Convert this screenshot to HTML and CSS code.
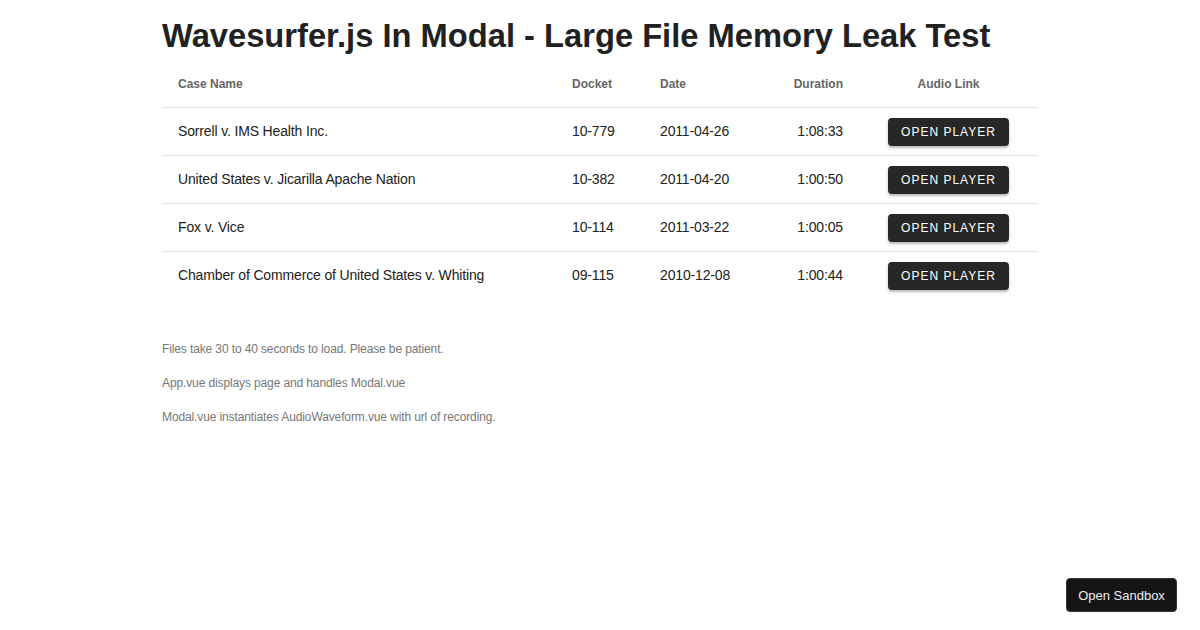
FILE: index.html
```html
<!DOCTYPE html>
<html lang="en">
<head>
    <meta charset="UTF-8">
    <meta name="viewport" content="width=device-width, initial-scale=1.0">
    <title>Wavesurfer.js In Modal</title>
    <link rel="stylesheet" href="styles.css">
</head>
<body>
    <div class="container">
        <h1>Wavesurfer.js In Modal - Large File Memory Leak Test</h1>

        <table class="cases">
            <thead>
                <tr>
                    <th class="col-name">Case Name</th>
                    <th class="col-docket">Docket</th>
                    <th class="col-date">Date</th>
                    <th class="col-duration">Duration</th>
                    <th class="col-audio">Audio Link</th>
                </tr>
            </thead>
            <tbody>
                <tr>
                    <td>Sorrell v. IMS Health Inc.</td>
                    <td>10-779</td>
                    <td>2011-04-26</td>
                    <td class="col-duration">1:08:33</td>
                    <td class="col-audio"><button class="player-btn">Open Player</button></td>
                </tr>
                <tr>
                    <td>United States v. Jicarilla Apache Nation</td>
                    <td>10-382</td>
                    <td>2011-04-20</td>
                    <td class="col-duration">1:00:50</td>
                    <td class="col-audio"><button class="player-btn">Open Player</button></td>
                </tr>
                <tr>
                    <td>Fox v. Vice</td>
                    <td>10-114</td>
                    <td>2011-03-22</td>
                    <td class="col-duration">1:00:05</td>
                    <td class="col-audio"><button class="player-btn">Open Player</button></td>
                </tr>
                <tr>
                    <td>Chamber of Commerce of United States v. Whiting</td>
                    <td>09-115</td>
                    <td>2010-12-08</td>
                    <td class="col-duration">1:00:44</td>
                    <td class="col-audio"><button class="player-btn">Open Player</button></td>
                </tr>
            </tbody>
        </table>

        <div class="notes">
            <p>Files take 30 to 40 seconds to load. Please be patient.</p>
            <p>App.vue displays page and handles Modal.vue</p>
            <p>Modal.vue instantiates AudioWaveform.vue with url of recording.</p>
        </div>
    </div>

    <button class="sandbox-btn">Open Sandbox</button>
</body>
</html>
```

FILE: styles.css
```css
body {
    margin: 0;
    font-family: "Liberation Sans", Arial, sans-serif;
    color: #212121;
    background-color: #fff;
}
.container {
    width: 876px;
    margin: 0 auto;
    padding-top: 16px;
}
h1 {
    margin: 0;
    font-size: 32.7px;
    font-weight: bold;
    line-height: 40px;
    color: #212121;
}
.cases {
    width: 100%;
    table-layout: fixed;
    border-collapse: collapse;
    margin-top: 3px;
}
.cases th,
.cases td {
    box-sizing: border-box;
    padding: 0 16px;
    border-bottom: 1px solid #e0e0e0;
}
.cases th {
    height: 48px;
    padding-top: 2px;
    font-size: 12px;
    font-weight: bold;
    color: #666;
    text-align: left;
}
.cases td {
    height: 48px;
    font-size: 14px;
    letter-spacing: -0.15px;
    white-space: nowrap;
}
.cases tbody tr:last-child td {
    border-bottom: none;
}
.col-name { width: 394px; }
.col-docket { width: 88px; }
.col-date { width: 115px; }
.col-duration { width: 100px; }
.col-audio { width: 179px; }
.cases .col-duration { text-align: right; }
.cases .col-audio { text-align: center; }
.player-btn {
    background-color: #272727;
    color: #fff;
    border: none;
    border-radius: 4px;
    height: 28px;
    width: 121px;
    margin-top: 2px;
    padding: 0;
    font-family: "Liberation Sans", Arial, sans-serif;
    font-size: 12px;
    letter-spacing: 1px;
    text-transform: uppercase;
    box-shadow: 0 2px 2px rgba(0,0,0,0.2), 0 1px 4px rgba(0,0,0,0.12);
    cursor: pointer;
}
.notes {
    margin-top: 42px;
}
.notes p {
    margin: 0 0 18px;
    font-size: 12px;
    line-height: 16px;
    letter-spacing: -0.12px;
    color: #777;
}
.sandbox-btn {
    position: fixed;
    right: 23px;
    bottom: 18px;
    width: 111px;
    height: 34px;
    background-color: #151515;
    color: #eee;
    border: 1px solid #333;
    border-radius: 4px;
    font-family: "Liberation Sans", Arial, sans-serif;
    font-size: 13px;
    cursor: pointer;
}
```
